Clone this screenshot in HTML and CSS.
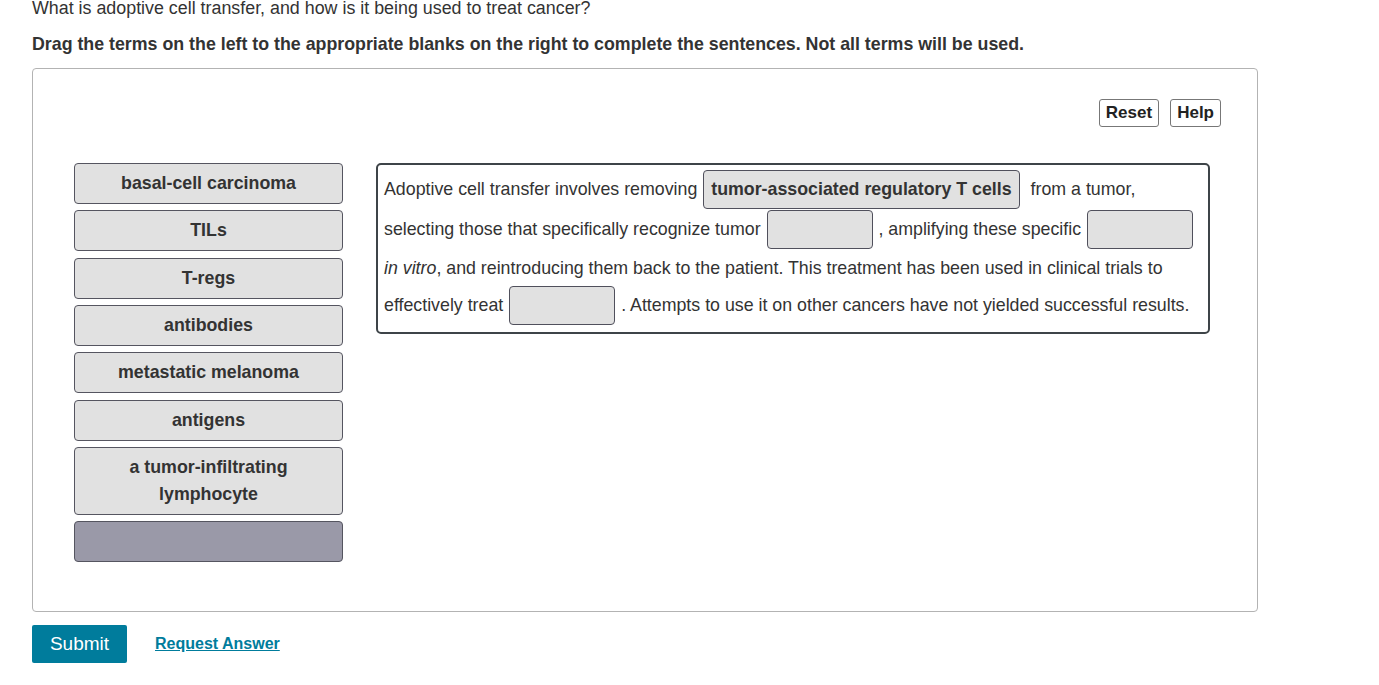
FILE: index.html
```html
<!DOCTYPE html>
<html>
<head>
<meta charset="utf-8">
<link rel="stylesheet" href="styles.css">
</head>
<body>
<div class="page">
  <p class="question">What is adoptive cell transfer, and how is it being used to treat cancer?</p>
  <p class="instructions">Drag the terms on the left to the appropriate blanks on the right to complete the sentences. Not all terms will be used.</p>
  <div class="panel">
    <div class="toolbar">
      <button class="tool-btn">Reset</button>
      <button class="tool-btn">Help</button>
    </div>
    <div class="work">
      <div class="terms">
        <div class="term">basal-cell carcinoma</div>
        <div class="term">TILs</div>
        <div class="term">T-regs</div>
        <div class="term">antibodies</div>
        <div class="term">metastatic melanoma</div>
        <div class="term">antigens</div>
        <div class="term">a tumor-infiltrating lymphocyte</div>
        <div class="term term-empty"></div>
      </div>
      <div class="passage">Adoptive cell transfer involves removing <span class="blank blank-filled">tumor-associated regulatory T cells</span> from a tumor, selecting those that specifically recognize tumor <span class="blank"></span> , amplifying these specific <span class="blank"></span> <em>in vitro</em>, and reintroducing them back to the patient. This treatment has been used in clinical trials to effectively treat <span class="blank"></span> . Attempts to use it on other cancers have not yielded successful results.</div>
    </div>
  </div>
  <div class="actions">
    <button class="submit">Submit</button>
    <a class="request" href="#">Request Answer</a>
  </div>
</div>
</body>
</html>
```
FILE: styles.css
```css
html, body {
  margin: 0;
  padding: 0;
  background: #fff;
}
body {
  font-family: "Liberation Sans", Arial, sans-serif;
  color: #333;
}
.page {
  padding: 0 32px;
}
.question {
  margin: -4px 0 0;
  font-size: 17.85px;
  line-height: 24px;
}
.instructions {
  margin: 12px 0 0;
  font-size: 17.8px;
  font-weight: bold;
  line-height: 24px;
}
.panel {
  margin-top: 12px;
  width: 1226px;
  box-sizing: border-box;
  border: 1px solid #b3b3b3;
  border-radius: 4px;
  padding: 30px 36px 49px 41px;
}
.toolbar {
  display: flex;
  justify-content: flex-end;
  gap: 11px;
}
.tool-btn {
  font-family: inherit;
  font-size: 17px;
  font-weight: bold;
  color: #222;
  background: #fff;
  border: 1px solid #777;
  border-radius: 3px;
  padding: 0 6px;
  height: 28px;
  line-height: 26px;
}
.work {
  margin-top: 36px;
  display: flex;
  align-items: flex-start;
  gap: 33px;
}
.terms {
  width: 269px;
  display: flex;
  flex-direction: column;
  gap: 6.35px;
}
.term {
  box-sizing: border-box;
  min-height: 41px;
  border: 1px solid #555560;
  border-radius: 4px;
  background: #e1e1e1;
  padding: 6px 10px;
  text-align: center;
  font-size: 17.8px;
  font-weight: bold;
  line-height: 27px;
  color: #333;
}
.term-empty {
  background: #9a99a8;
}
.passage {
  width: 834px;
  box-sizing: border-box;
  border: 2px solid #3e4448;
  border-radius: 5px;
  padding: 5px 6px 6px;
  font-size: 17.8px;
  line-height: 36px;
  color: #333;
}
.blank {
  display: inline-block;
  box-sizing: border-box;
  width: 106px;
  height: 39px;
  vertical-align: middle;
  border: 1px solid #50505c;
  border-radius: 4px;
  background: #e1e1e1;
  margin: 0 1px 1px;
}
.blank-filled {
  width: auto;
  padding: 0 7px;
  margin-right: 6px;
  font-weight: bold;
  line-height: 37px;
}
.actions {
  margin-top: 13px;
  display: flex;
  align-items: center;
  gap: 28px;
}
.submit {
  font-family: inherit;
  background: #007c9c;
  color: #fff;
  border: none;
  border-radius: 2px;
  font-size: 19px;
  width: 95px;
  height: 38px;
  padding: 0;
}
.request {
  font-size: 16px;
  font-weight: bold;
  color: #007c9c;
  text-decoration: underline;
}
```
